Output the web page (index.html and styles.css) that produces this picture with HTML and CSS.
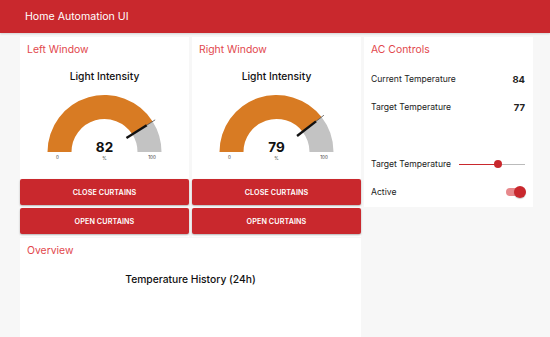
FILE: index.html
```html
<!DOCTYPE html>
<html lang="en">
<head>
  <meta charset="UTF-8">
  <title>Home Automation UI</title>
  <link rel="stylesheet" href="styles.css">
</head>
<body>
  <div class="toolbar">Home Automation UI</div>
  <div class="layout">
    <div class="group window">
      <p class="group-title">Left Window</p>
      <svg class="gauge" viewBox="0 0 169 117" width="169" height="117">
        <text x="84.5" y="18" class="gauge-title">Light Intensity</text>
        <path d="M 27.5 90 A 57 57 0 0 1 132.63 59.46 L 112.36 72.32 A 33 33 0 0 0 51.5 90 Z" fill="#d87b23"/>
        <path d="M 132.63 59.46 A 57 57 0 0 1 141.5 90 L 117.5 90 A 33 33 0 0 0 112.36 72.32 Z" fill="#c3c3c3"/>
        <line x1="106.45" y1="76.07" x2="126.72" y2="63.21" stroke="#111" stroke-width="2.4"/>
        <line x1="126.72" y1="63.21" x2="135.16" y2="57.85" stroke="#333" stroke-width="0.7"/>
        <text x="84.5" y="90" class="gauge-value">82</text>
        <text x="84.5" y="98" class="gauge-small">%</text>
        <text x="37.5" y="97" class="gauge-small">0</text>
        <text x="132" y="97" class="gauge-small">100</text>
      </svg>
      <div class="buttons">
        <button>Close Curtains</button>
        <button>Open Curtains</button>
      </div>
    </div>

    <div class="group window">
      <p class="group-title">Right Window</p>
      <svg class="gauge" viewBox="0 0 169 117" width="169" height="117">
        <text x="84.5" y="18" class="gauge-title">Light Intensity</text>
        <path d="M 27.5 90 A 57 57 0 0 1 129.54 55.06 L 110.58 69.77 A 33 33 0 0 0 51.5 90 Z" fill="#d87b23"/>
        <path d="M 129.54 55.06 A 57 57 0 0 1 141.5 90 L 117.5 90 A 33 33 0 0 0 110.58 69.77 Z" fill="#c3c3c3"/>
        <line x1="105.05" y1="74.06" x2="124.01" y2="59.35" stroke="#111" stroke-width="2.4"/>
        <line x1="124.01" y1="59.35" x2="131.91" y2="53.23" stroke="#333" stroke-width="0.7"/>
        <text x="84.5" y="90" class="gauge-value">79</text>
        <text x="84.5" y="98" class="gauge-small">%</text>
        <text x="37.5" y="97" class="gauge-small">0</text>
        <text x="132" y="97" class="gauge-small">100</text>
      </svg>
      <div class="buttons">
        <button>Close Curtains</button>
        <button>Open Curtains</button>
      </div>
    </div>

    <div class="group ac">
      <p class="group-title">AC Controls</p>
      <div class="rows">
        <div class="row">
          <span>Current Temperature</span>
          <strong>84</strong>
        </div>
        <div class="row">
          <span>Target Temperature</span>
          <strong>77</strong>
        </div>
        <div class="spacer"></div>
        <div class="row">
          <span>Target Temperature</span>
          <div class="slider">
            <div class="slider-fill"></div>
            <div class="slider-thumb"></div>
          </div>
        </div>
        <div class="row">
          <span>Active</span>
          <div class="toggle">
            <div class="toggle-thumb"></div>
          </div>
        </div>
      </div>
    </div>

    <div class="group overview">
      <p class="group-title">Overview</p>
      <p class="chart-title">Temperature History (24h)</p>
    </div>
  </div>
</body>
</html>
```

FILE: styles.css
```css
body {
  font-family: 'Inter', 'Liberation Sans', sans-serif;
  margin: 0;
  padding: 0;
  background-color: #f7f7f7;
  color: #111;
  overflow: hidden;
}

.toolbar {
  height: 33px;
  background: #c9282d;
  color: #fff;
  font-size: 10.6px;
  line-height: 34px;
  padding-left: 25px;
  box-shadow: 0 1px 2px rgba(0,0,0,0.15);
}

.layout {
  display: grid;
  grid-template-columns: 169px 169px 169px;
  grid-template-areas:
    "left right ac"
    "ov ov .";
  column-gap: 3px;
  row-gap: 1px;
  padding: 4px 0 0 20px;
}

.group {
  background: #fff;
}

.window:nth-child(1) { grid-area: left; }
.window:nth-child(2) { grid-area: right; }

.group-title {
  margin: 0;
  height: 25px;
  line-height: 25px;
  padding-left: 7px;
  font-size: 10.4px;
  color: #e2474d;
}

.gauge {
  display: block;
}

.gauge-title {
  font-size: 10.3px;
  text-anchor: middle;
  fill: #111;
  font-weight: 500;
}

.gauge-value {
  font-size: 13.5px;
  font-weight: 700;
  text-anchor: middle;
  fill: #111;
}

.gauge-small {
  font-size: 4.5px;
  text-anchor: middle;
  fill: #333;
}

.buttons {
  display: flex;
  flex-direction: column;
  gap: 3px;
  padding-bottom: 3px;
}

.buttons button {
  height: 26px;
  border: none;
  border-radius: 2px;
  background: #c9282d;
  color: #fff;
  font-family: inherit;
  font-size: 7.2px;
  font-weight: 600;
  text-transform: uppercase;
  letter-spacing: 0.1px;
  box-shadow: 0 1px 2px rgba(0,0,0,0.3);
  cursor: pointer;
}

.ac {
  grid-area: ac;
  align-self: start;
}

.rows {
  padding: 3px 0 1px 0;
}

.row {
  display: flex;
  align-items: center;
  justify-content: space-between;
  height: 28px;
  padding: 0 8px 0 7px;
  font-size: 8.6px;
  color: #222;
}

.row strong {
  font-size: 9.5px;
  font-weight: 700;
}

.spacer {
  height: 29px;
}

.slider {
  position: relative;
  width: 66px;
  height: 1px;
  background: #bbb;
}

.slider-fill {
  width: 39px;
  height: 1px;
  background: #c9282d;
}

.slider-thumb {
  position: absolute;
  left: 35px;
  top: -4px;
  width: 8px;
  height: 8px;
  border-radius: 50%;
  background: #c9282d;
}

.toggle {
  position: relative;
  width: 17px;
  height: 8px;
  border-radius: 4px;
  background: #e7898c;
  margin-right: 2px;
}

.toggle-thumb {
  position: absolute;
  right: -3px;
  top: -2px;
  width: 12px;
  height: 12px;
  border-radius: 50%;
  background: #c9282d;
  box-shadow: 0 1px 1px rgba(0,0,0,0.2);
}

.overview {
  grid-area: ov;
  height: 99px;
}

.chart-title {
  margin: 10px 0 0 0;
  text-align: center;
  font-size: 10.3px;
  font-weight: 500;
}
```
